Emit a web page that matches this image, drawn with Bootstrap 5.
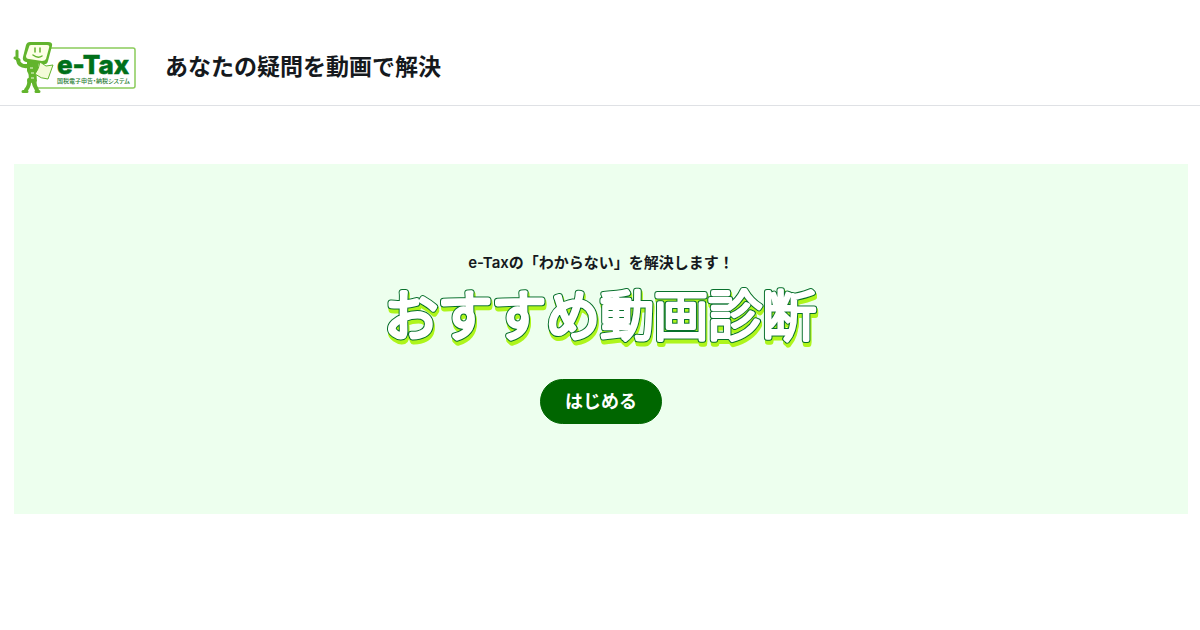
<!DOCTYPE html>
<html lang="ja">
<head>
<meta charset="utf-8">
<meta name="viewport" content="width=device-width, initial-scale=1">
<title>あなたの疑問を動画で解決 | e-Tax</title>
<link href="https://cdn.jsdelivr.net/npm/bootstrap@5.3.0/dist/css/bootstrap.min.css" rel="stylesheet">
<style>
  body { font-family: Inter, "Noto Sans CJK JP", sans-serif; color: #15191d; }
  .site-header { padding: 40px 13px 11px 12px; border-color: #dfe1e5 !important; gap: 29px; }
  .brand-logo { width: 124px; height: 54px; }
  .site-title { font-size: 23px; line-height: 32px; font-weight: 700; }
  .page-main { padding: 58px 12px 40px 14px; }
  .hero { background: #edffee; padding: 90px 16px; }
  .hero-lead { font-size: 15px; line-height: 18px; font-weight: 600; }
  .hero-title { margin: 0 0 25px; line-height: 1; }
  .hero-title svg { width: 440px; max-width: 100%; height: auto; }
  .title-glyphs { font-family: "Noto Sans CJK JP", sans-serif; font-size: 54px; font-weight: 300; }
  /* Kana carry a thicker stroke than kanji; each layer adds its own rim. */
  .title-layer { --rim: 0px; stroke-linejoin: round; stroke-linecap: round; }
  .title-outline { --rim: 2px; }
  .kana { stroke-width: calc(5px + var(--rim)); }
  .kanji { stroke-width: calc(4px + var(--rim)); }
  .btn-start {
    --bs-btn-color: #fff; --bs-btn-bg: #060; --bs-btn-border-color: #060;
    --bs-btn-hover-color: #fff; --bs-btn-hover-bg: #005200; --bs-btn-hover-border-color: #005200;
    font-size: 18px; line-height: 27px; font-weight: 700; padding: 8px 24px;
  }
</style>
</head>
<body>
<header class="site-header d-flex align-items-center border-bottom">
  <a href="#" class="d-block lh-1" aria-label="e-Tax">
    <svg class="brand-logo d-block" viewBox="0 0 124 54">
      <rect x="24" y="8" width="99" height="40" rx="2" fill="#fff" stroke="#8acb5b" stroke-width="1.500"/>
      <g fill="none" stroke="#62b42d" stroke-linecap="round" stroke-linejoin="round">
        <path d="M5 11v7M3 18l4 2" stroke-width="3"/>
        <path d="M6 20q1 7 10 6" stroke-width="4"/>
        <path d="M17 40q1 5-3 10M21 40q1 5 4 10" stroke-width="4"/>
        <path d="M11 51.500h4M24 51.500h3" stroke-width="3"/>
      </g>
      <path d="M15 22h12l-1 8q-3 6-1 11-4 4-9 0 2-5-1-10z" fill="#62b42d"/>
      <path d="M18 2h18q5 0 4 4l-4 15q-1 4-5 3l-17-2q-4-1-3-5l3-12q1-3 4-3z" fill="#62b42d"/>
      <path d="M19 5h16q3 0 2 3l-3 11q-1 2-4 2l-13-2q-3 0-3-3l3-9q0-2 2-2z" fill="#fdffe6"/>
      <path d="M23 8v4M28 8v4M21 15q5 4 9 1" fill="none" stroke="#62b42d" stroke-width="1.500" stroke-linecap="round"/>
      <path d="M28 22l6 4 7-1-5 14q-7 0-13-5 4-5 5-12z" fill="#f4fbd8" stroke="#62b42d"/>
      <path d="M18 28h3M19 33h3M19 38h3" stroke="#effbe2" fill="none"/>
      <text x="45" y="34" font-family="Inter, sans-serif" font-size="26" font-weight="800" fill="#00701a" stroke="#00701a" stroke-width=".5">e-Tax</text>
      <text x="45" y="43" font-family="Noto Sans CJK JP, sans-serif" font-size="6" font-weight="500" fill="#287c32" style="font-feature-settings:'palt'">国税電子申告・納税システム</text>
    </svg>
  </a>
  <p class="site-title mb-0">あなたの疑問を動画で解決</p>
</header>
<main class="page-main">
  <section class="hero text-center">
    <p class="hero-lead mb-0">e-Taxの「わからない」を解決します！</p>
    <h1 class="hero-title">
      <svg class="d-inline-block" viewBox="0 0 440 82">
        <g class="title-layer title-outline" fill="#aef51c" stroke="#aef51c">
          <use href="#title-text" x="1" y="4"/>
          <use href="#title-text" x="1" y="2"/>
        </g>
        <use class="title-layer title-outline" href="#title-text" fill="#08702c" stroke="#08702c"/>
        <g class="title-layer" fill="#fff" stroke="#fff">
          <text id="title-text" class="title-glyphs" x="3" y="64"><tspan class="kana">おすすめ</tspan><tspan class="kanji">動画診断</tspan></text>
        </g>
      </svg>
    </h1>
    <button type="button" class="btn btn-start rounded-pill">はじめる</button>
  </section>
</main>
<script src="https://cdn.jsdelivr.net/npm/bootstrap@5.3.0/dist/js/bootstrap.bundle.min.js"></script>
</body>
</html>
